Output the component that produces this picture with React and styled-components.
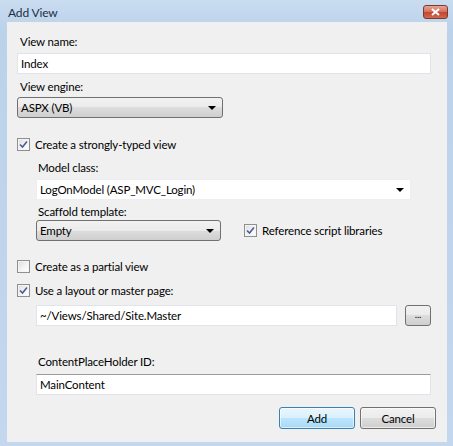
import React from "react";
import styled, { createGlobalStyle } from "styled-components";

const GlobalStyle = createGlobalStyle`
    html, body {
        margin: 0;
        padding: 0;
        background: #ffffff;
    }
    body {
        font-family: "Segoe UI", Lato, "Noto Sans", sans-serif;
        font-size: 11.5px;
        letter-spacing: -0.15px;
        color: #000;
    }
`;

const Window = styled.div`
    width: 453px;
    height: 446px;
    box-sizing: border-box;
    display: flex;
    flex-direction: column;
    background: linear-gradient(180deg, #c9dcf0 0%, #bcd2eb 30px, #c3d7ee 100%);
    padding: 0 6px 4px 7px;
`;

const TitleBar = styled.div`
    height: 22px;
    display: flex;
    align-items: center;
    justify-content: space-between;
    padding-left: 1px;
`;

const Title = styled.span`
    font-size: 12px;
    color: #1b2f47;
    margin-top: 2px;
`;

const CloseButton = styled.div`
    width: 25px;
    height: 14px;
    box-sizing: border-box;
    margin-right: -1px;
    margin-top: 2px;
    border: 1px solid #7a3a30;
    border-radius: 3px;
    background: linear-gradient(180deg, #e7a595 0%, #d6735f 45%, #c2482f 55%, #cf6a4f 100%);
    display: flex;
    align-items: center;
    justify-content: center;
`;

const Body = styled.div`
    flex: 1;
    background: #f0f0f0;
    padding: 12px 10px 0 10px;
    display: flex;
    flex-direction: column;
`;

const Label = styled.div`
    height: 15px;
    line-height: 15px;
    margin-top: ${(p) => p.$mt || 0}px;
    margin-left: ${(p) => (p.$indent ? 21 : 3)}px;
    white-space: nowrap;
`;

const TextBox = styled.div`
    height: 21px;
    box-sizing: border-box;
    margin-top: ${(p) => p.$mt || 0}px;
    margin-left: ${(p) => (p.$indent ? 19 : 0)}px;
    width: ${(p) => p.$w}px;
    background: #fff;
    border: 1px solid #e2e3ea;
    border-top-color: ${(p) => (p.$dark ? "#9a9a9a" : "#e2e3ea")};
    padding-left: 3px;
    line-height: 19px;
    white-space: nowrap;
`;

const Combo = styled.div`
    height: 21px;
    box-sizing: border-box;
    margin-top: ${(p) => p.$mt || 0}px;
    margin-left: ${(p) => (p.$indent ? 19 : 0)}px;
    width: ${(p) => p.$w}px;
    border: 1px solid #707070;
    border-radius: 3px;
    background: linear-gradient(180deg, #f2f2f2 0%, #ebebeb 50%, #dddddd 50%, #cfcfcf 100%);
    display: flex;
    align-items: center;
    justify-content: space-between;
    padding: 0 6px 0 3px;
`;

const EditCombo = styled(Combo)`
    border: 1px solid #eceef2;
    border-radius: 0;
    background: #fff;
`;

const Arrow = styled.span`
    width: 0;
    height: 0;
    border-left: 4px solid transparent;
    border-right: 4px solid transparent;
    border-top: 4px solid #000;
    margin-top: 1px;
`;

const Row = styled.div`
    display: flex;
    align-items: center;
    margin-top: ${(p) => p.$mt || 0}px;
    margin-left: ${(p) => (p.$indent ? 19 : 0)}px;
`;

const CheckRow = styled.label`
    display: flex;
    align-items: center;
    height: 15px;
    margin-top: ${(p) => p.$mt || 0}px;
    margin-left: ${(p) => p.$ml || 0}px;
    white-space: nowrap;
`;

const Box = styled.span`
    width: 13px;
    height: 13px;
    box-sizing: border-box;
    border: 1px solid #8f8f8f;
    background: linear-gradient(135deg, #dcdcdc 0%, #f6f6f6 60%, #ffffff 100%);
    box-shadow: inset 0 0 0 1px #f4f4f4;
    margin-right: 5px;
    display: flex;
    align-items: center;
    justify-content: center;
`;

const SmallButton = styled.div`
    width: 26px;
    height: 21px;
    box-sizing: border-box;
    margin-left: 8px;
    border: 1px solid #707070;
    border-radius: 3px;
    background: linear-gradient(180deg, #f2f2f2 0%, #ebebeb 50%, #dddddd 50%, #cfcfcf 100%);
    display: flex;
    align-items: center;
    justify-content: center;
    font-size: 10px;
    line-height: 1;
    padding-bottom: 3px;
`;

const ButtonBar = styled.div`
    display: flex;
    justify-content: flex-end;
    gap: 5px;
    margin-top: 12px;
    margin-right: 1px;
`;

const Button = styled.div`
    width: 76px;
    height: 22px;
    box-sizing: border-box;
    border: 1px solid ${(p) => (p.$primary ? "#3c7fb1" : "#707070")};
    border-radius: 3px;
    background: ${(p) =>
        p.$primary
            ? "linear-gradient(180deg, #eaf6fd 0%, #d9f0fc 50%, #bee6fd 50%, #a7d9f5 100%)"
            : "linear-gradient(180deg, #f2f2f2 0%, #ebebeb 50%, #dddddd 50%, #cfcfcf 100%)"};
    box-shadow: inset 0 0 0 1px rgba(255, 255, 255, 0.6);
    display: flex;
    align-items: center;
    justify-content: center;
`;

function CheckBox({ checked, children, mt, ml }) {
    return (
        <CheckRow $mt={mt} $ml={ml}>
            <Box>
                {checked && (
                    <svg width="9" height="9" viewBox="0 0 9 9">
                        <path d="M1 4.5 L3.5 7 L8 1.5" fill="none" stroke="#4a5f97" strokeWidth="1.6" />
                    </svg>
                )}
            </Box>
            {children}
        </CheckRow>
    );
}

export default function App() {
    return (
        <>
            <GlobalStyle />
            <Window>
                <TitleBar>
                    <Title>Add View</Title>
                    <CloseButton>
                        <svg width="9" height="8" viewBox="0 0 9 8">
                            <path d="M1 1 L8 7 M8 1 L1 7" stroke="#fff" strokeWidth="2" />
                        </svg>
                    </CloseButton>
                </TitleBar>
                <Body>
                    <Label>View name:</Label>
                    <TextBox $w={414} $mt={4}>Index</TextBox>
                    <Label $mt={5}>View engine:</Label>
                    <Combo $w={206} $mt={3}>
                        <span>ASPX (VB)</span>
                        <Arrow />
                    </Combo>

                    <CheckBox checked mt={19}>Create a strongly-typed view</CheckBox>
                    <Label $indent $mt={8}>Model class:</Label>
                    <EditCombo $indent $w={375} $mt={4}>
                        <span>LogOnModel (ASP_MVC_Login)</span>
                        <Arrow />
                    </EditCombo>
                    <Label $indent $mt={4}>Scaffold template:</Label>
                    <Row $indent $mt={1}>
                        <Combo $w={185}>
                            <span>Empty</span>
                            <Arrow />
                        </Combo>
                        <CheckBox checked ml={23}>Reference script libraries</CheckBox>
                    </Row>

                    <CheckBox mt={18}>Create as a partial view</CheckBox>
                    <CheckBox checked mt={9}>Use a layout or master page:</CheckBox>
                    <Row $indent $mt={7}>
                        <TextBox $w={361}>~/Views/Shared/Site.Master</TextBox>
                        <SmallButton>...</SmallButton>
                    </Row>
                    <Label $indent $mt={28}>ContentPlaceHolder ID:</Label>
                    <TextBox $indent $dark $w={395} $mt={5}>MainContent</TextBox>

                    <ButtonBar>
                        <Button $primary>Add</Button>
                        <Button>Cancel</Button>
                    </ButtonBar>
                </Body>
            </Window>
        </>
    );
}
